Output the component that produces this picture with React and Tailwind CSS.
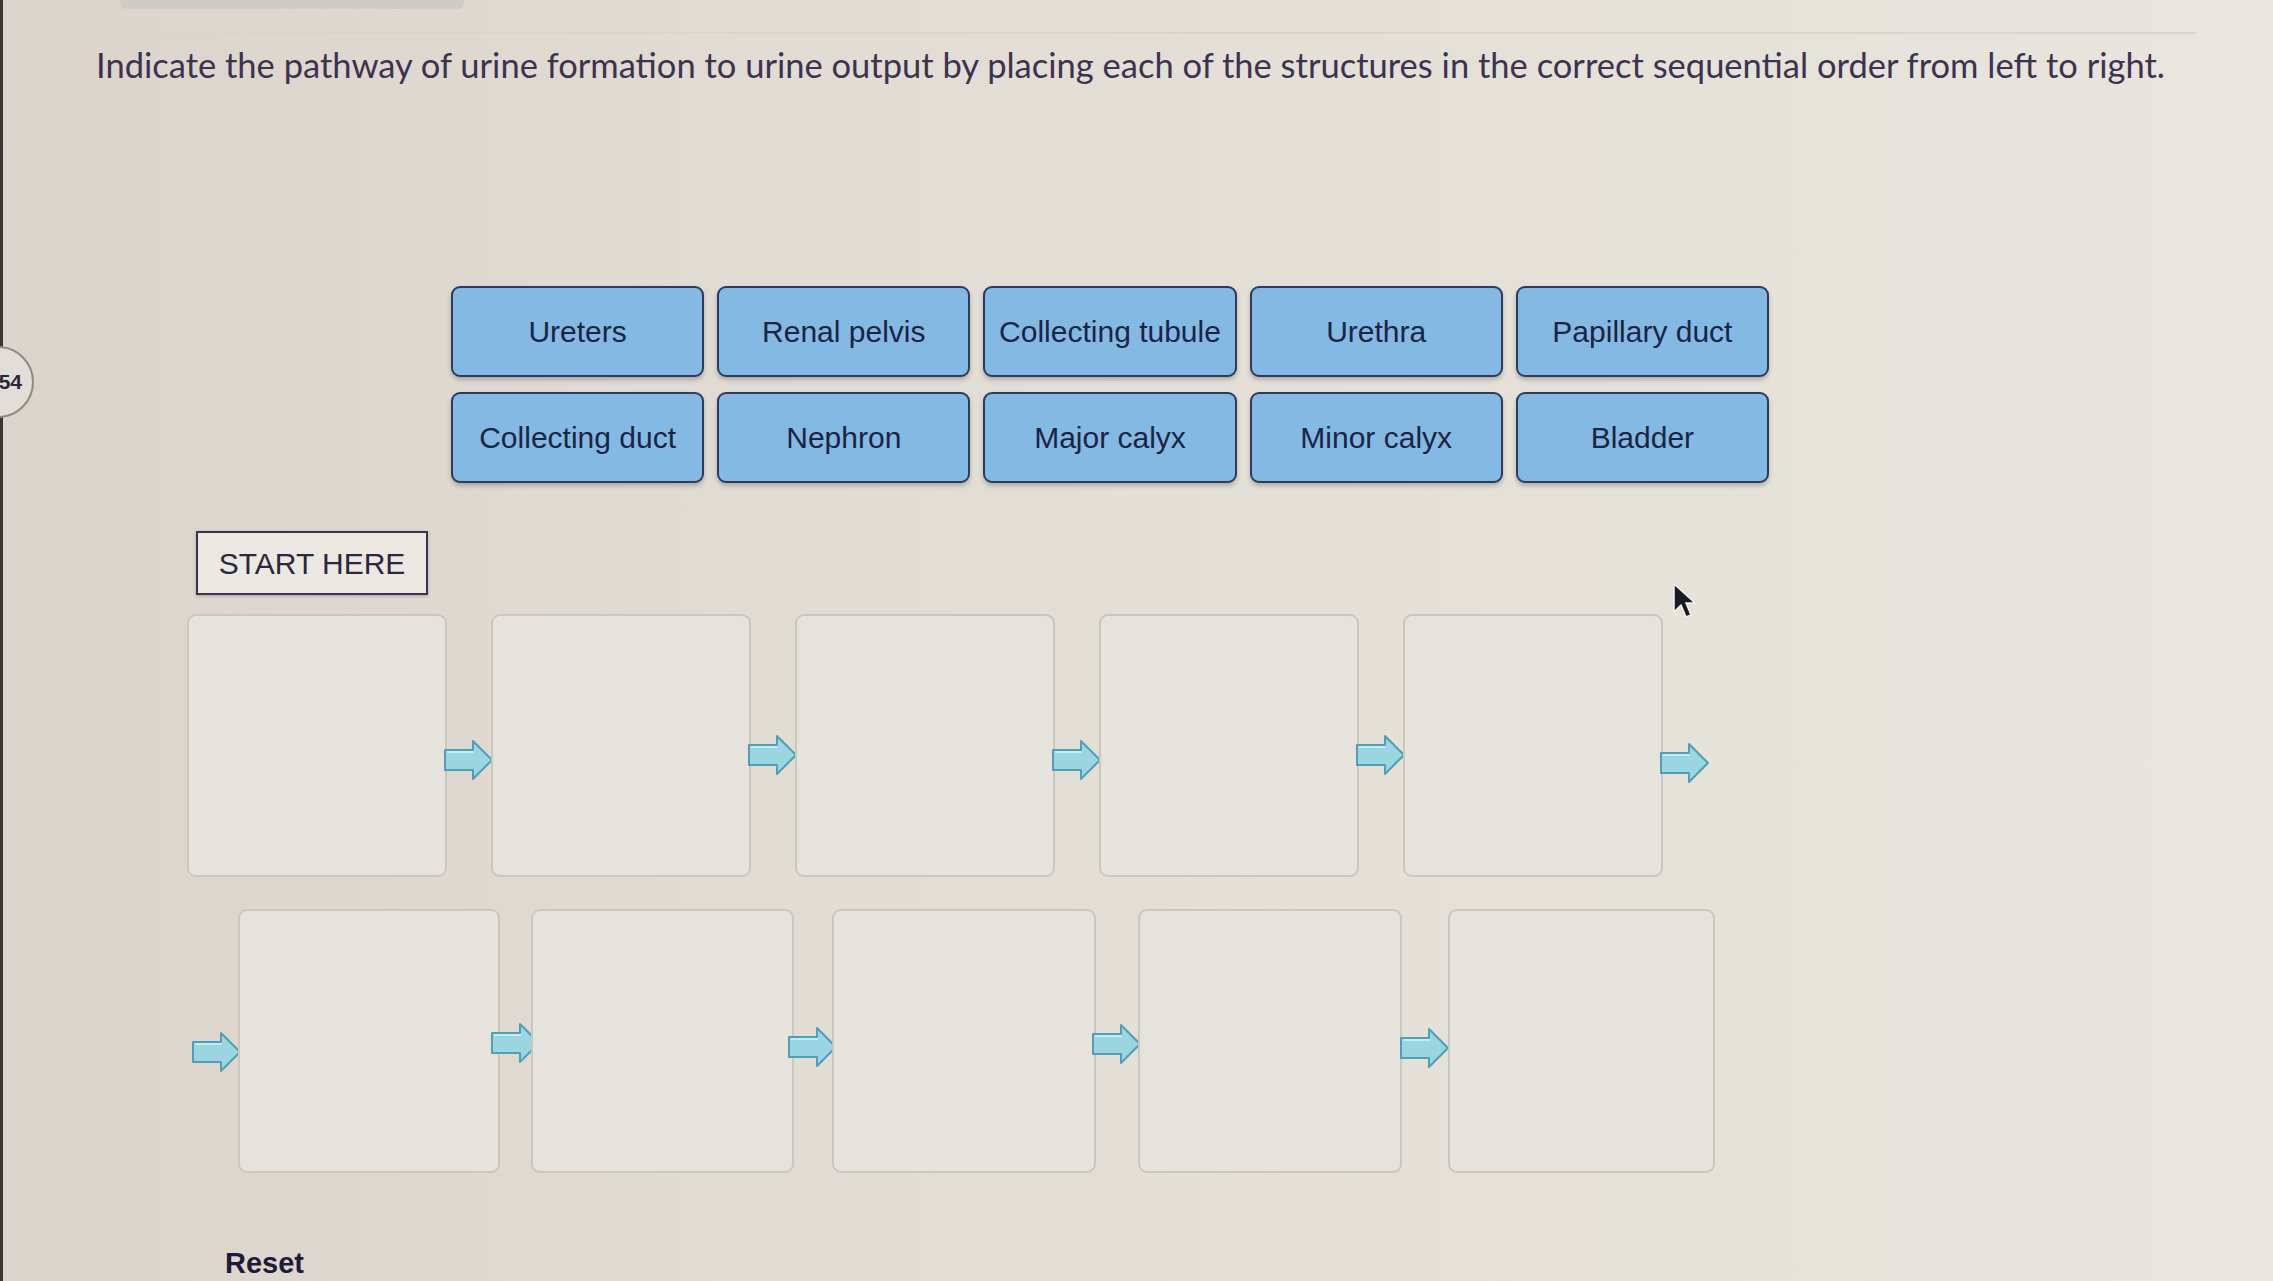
import React from 'react';

const choices = [
  'Ureters',
  'Renal pelvis',
  'Collecting tubule',
  'Urethra',
  'Papillary duct',
  'Collecting duct',
  'Nephron',
  'Major calyx',
  'Minor calyx',
  'Bladder',
];

// little cyan block arrow that sits between the drop zones
const Arrow = () => (
  <svg width="52" height="44" viewBox="0 0 52 44" className="block">
    <path
      d="M2 12 L30 12 L30 3 L49 22 L30 41 L30 32 L2 32 Z"
      fill="#9ad5e1"
      stroke="#4f9fb6"
      strokeWidth="2"
      strokeLinejoin="round"
    />
    <path d="M4 14 L31 14" stroke="#c6ecf2" strokeWidth="2" />
  </svg>
);

const DropBox = ({ w = 'w-[260px]', h = 'h-[263px]' }) => (
  <div className={`${w} ${h} shrink-0 rounded-[9px] border-2 border-[#cbc6bf] bg-[#e6e3dc]`} />
);

const ArrowSlot = ({ w = 'w-[44px]', offset = 'mt-[28px]' }) => (
  <div className={`${w} shrink-0 flex items-center justify-center ${offset}`}>
    <div className="-mx-[6px]">
      <Arrow />
    </div>
  </div>
);

export default function App() {
  return (
    <div className="relative w-full h-[1281px] overflow-hidden bg-linear-to-r from-[#dbd4cc] via-[#e3dfd7] to-[#e7e5dd]">
      {/* left edge of the screen + side tab */}
      <div className="absolute left-0 top-0 h-full w-[3px] bg-[#3a3636]" />
      <div className="absolute left-[3px] top-0 h-[150px] w-[42px] rounded-br-[6px] border-r border-b border-[#d6d1ca]" />
      <div className="absolute left-[-40px] top-[346px] flex h-[72px] w-[74px] items-center justify-end rounded-full border-2 border-[#8e8983] bg-[#e2ded7] pr-[10px]">
        <span className="font-['Liberation_Sans',sans-serif] text-[21px] font-bold text-[#2b2838]">54</span>
      </div>

      {/* mouse pointer */}
      <svg className="absolute left-[1672px] top-[582px]" width="26" height="40" viewBox="0 0 26 40">
        <path d="M2 2 L2 30 L9 23 L14 35 L19 33 L14 21 L23 21 Z" fill="#1b1b22" stroke="#f2f2f2" strokeWidth="1.5" />
      </svg>

      <div className="ml-[120px] h-[9px] w-[344px] rounded-b-[6px] bg-[#cfccc6]" />
      <div className="ml-[116px] mr-[77px] mt-[23px] h-[2px] bg-[#d9d4cc]" />

      <h1 className="mt-[10px] pl-[96px] font-['Lato',sans-serif] text-[34.5px] leading-[42px] text-[#3d3350]">
        Indicate the pathway of urine formation to urine output by placing each of the structures in the correct sequential order from left to right.
      </h1>

      {/* answer tiles */}
      <div className="mt-[200px] ml-[451px] grid w-[1318px] grid-cols-5 gap-x-[13px] gap-y-[15px]">
        {choices.map((c) => (
          <div
            key={c}
            className="flex h-[91px] items-center justify-center rounded-[9px] border-2 border-[#2f3a5c] bg-[#83b9e3] shadow-[0_3px_4px_rgba(60,60,70,0.3)] font-['Liberation_Sans',sans-serif] text-[30px] text-[#1c2443]"
          >
            {c}
          </div>
        ))}
      </div>

      <div className="mt-[48px] ml-[196px] flex h-[64px] w-[232px] items-center justify-center border-2 border-[#3b3352] bg-[#ebe8e2] shadow-[0_1px_3px_rgba(0,0,0,0.25)] font-['Liberation_Sans',sans-serif] text-[30px] text-[#2d2640]">
        START HERE
      </div>

      {/* first row of drop zones */}
      <div className="mt-[19px] ml-[187px] flex">
        <DropBox />
        <ArrowSlot />
        <DropBox />
        <ArrowSlot offset="mt-[18px]" />
        <DropBox />
        <ArrowSlot />
        <DropBox />
        <ArrowSlot offset="mt-[18px]" />
        <DropBox />
        <ArrowSlot offset="mt-[34px]" />
      </div>

      {/* second row */}
      <div className="mt-[32px] ml-[196px] flex">
        <ArrowSlot w="w-[42px]" offset="mt-[22px]" />
        <DropBox w="w-[262px]" h="h-[264px]" />
        <ArrowSlot w="w-[31px]" offset="mt-[4px]" />
        <DropBox w="w-[263px]" h="h-[264px]" />
        <ArrowSlot w="w-[38px]" offset="mt-[12px]" />
        <DropBox w="w-[264px]" h="h-[264px]" />
        <ArrowSlot w="w-[42px]" offset="mt-[6px]" />
        <DropBox w="w-[264px]" h="h-[264px]" />
        <ArrowSlot w="w-[46px]" offset="mt-[14px]" />
        <DropBox w="w-[267px]" h="h-[264px]" />
      </div>

      <div className="mt-[76px] ml-[225px] font-['Liberation_Sans',sans-serif] text-[29px] leading-none font-bold text-[#1f1c36]">
        Reset
      </div>
    </div>
  );
}
